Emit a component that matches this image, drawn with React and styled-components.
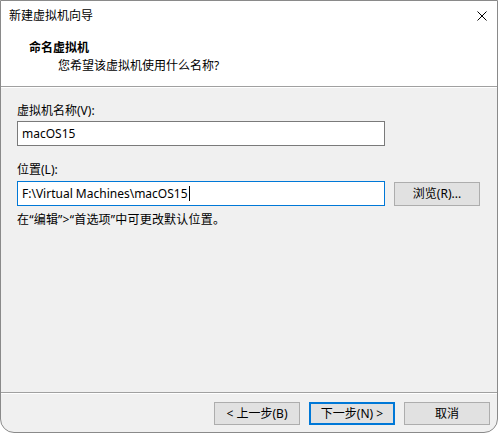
import React from "react";
import styled, { createGlobalStyle } from "styled-components";

const GlobalStyle = createGlobalStyle`
  html, body {
    margin: 0;
    padding: 0;
    background: #fff;
  }
  body {
    font-family: "Noto Sans", "Noto Sans CJK SC", sans-serif;
    font-size: 12px;
    color: #000;
  }
`;

const Window = styled.div`
  box-sizing: border-box;
  width: 498px;
  height: 433px;
  display: flex;
  flex-direction: column;
  border: 1px solid #8a8a8a;
  border-radius: 0 0 14px 14px;
  overflow: hidden;
  background: #f0f0f0;
`;

const TitleBar = styled.div`
  height: 29px;
  display: flex;
  align-items: center;
  justify-content: space-between;
  padding: 0 9px 0 8px;
  background: #fff;
`;

const Title = styled.span`
  font-size: 12px;
  line-height: 16px;
`;

const Close = styled.svg`
  width: 10px;
  height: 10px;
  margin-right: 1px;
`;

const Header = styled.div`
  height: 57px;
  box-sizing: border-box;
  padding: 10px 0 0 28px;
  background: #fff;
  border-bottom: 1px solid #a0a0a0;
  box-shadow: 0 1px 0 #fff;
`;

const HeaderTitle = styled.div`
  font-weight: bold;
  font-size: 12px;
  line-height: 16px;
`;

const HeaderSub = styled.div`
  margin: 2px 0 0 29px;
  line-height: 16px;
`;

const Body = styled.div`
  flex: 1;
  padding: 16px 0 0 16px;
`;

const Label = styled.div`
  line-height: 16px;
  margin-top: ${(p) => p.$top || 0}px;
`;

const Row = styled.div`
  display: flex;
  align-items: center;
  margin-top: ${(p) => p.$top || 0}px;
`;

const Field = styled.div`
  box-sizing: border-box;
  width: 368px;
  height: 25px;
  display: flex;
  align-items: center;
  padding-left: 4px;
  background: #fff;
  border: 1px solid ${(p) => (p.$focused ? "#0078d7" : "#7a7a7a")};
  font-family: "Noto Sans", "Noto Sans CJK SC", sans-serif;
  font-size: 12px;
`;

const Caret = styled.span`
  display: inline-block;
  width: 1px;
  height: 15px;
  background: #000;
  margin-left: 1px;
`;

const Button = styled.button`
  box-sizing: border-box;
  width: 86px;
  height: ${(p) => p.$h || 22}px;
  margin-left: ${(p) => p.$gap || 0}px;
  padding: 0;
  background: #e1e1e1;
  border: ${(p) => (p.$focused ? "2px solid #0078d7" : "1px solid #adadad")};
  font-family: "Noto Sans", "Noto Sans CJK SC", sans-serif;
  font-size: 12px;
  color: #000;
  line-height: 16px;
`;

const Note = styled.div`
  line-height: 16px;
  margin-top: 6px;
  letter-spacing: 0.2px;
`;

const Footer = styled.div`
  height: 40px;
  box-sizing: border-box;
  border-top: 1px solid #a0a0a0;
  box-shadow: inset 0 1px 0 #fff;
  display: flex;
  justify-content: flex-end;
  gap: 9px;
  padding: 9px 7px 0 0;
`;

export default function App() {
  return (
    <>
      <GlobalStyle />
      <Window>
        <TitleBar>
          <Title>新建虚拟机向导</Title>
          <Close viewBox="0 0 10 10">
            <path d="M0.5 0.5 L9.5 9.5 M9.5 0.5 L0.5 9.5" stroke="#000" strokeWidth="1" />
          </Close>
        </TitleBar>
        <Header>
          <HeaderTitle>命名虚拟机</HeaderTitle>
          <HeaderSub>您希望该虚拟机使用什么名称?</HeaderSub>
        </Header>
        <Body>
          <Label>虚拟机名称(V):</Label>
          <Row $top={2}>
            <Field>macOS15</Field>
          </Row>
          <Label $top={16}>位置(L):</Label>
          <Row $top={3}>
            <Field $focused>
              F:\Virtual Machines\macOS15
              <Caret />
            </Field>
            <Button $h={24} $gap={9}>浏览(R)...</Button>
          </Row>
          <Note>在“编辑”&gt;“首选项”中可更改默认位置。</Note>
        </Body>
        <Footer>
          <Button $h={23}>&lt; 上一步(B)</Button>
          <Button $h={23} $focused>下一步(N) &gt;</Button>
          <Button $h={23}>取消</Button>
        </Footer>
      </Window>
    </>
  );
}
